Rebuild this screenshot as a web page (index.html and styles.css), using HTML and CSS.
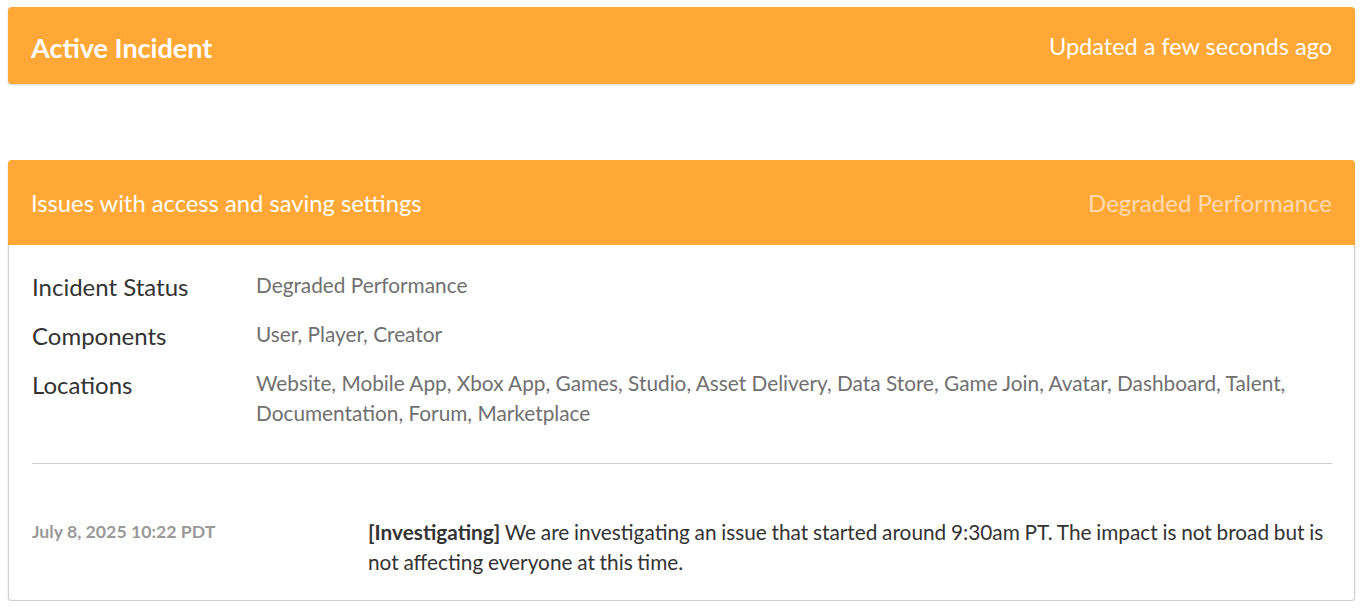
FILE: index.html
```html
<!DOCTYPE html>
<html>
<head>
<meta charset="utf-8">
<link rel="stylesheet" href="styles.css">
</head>
<body>
<div class="page">
  <div class="banner">
    <h1 class="banner-title">Active Incident</h1>
    <span class="banner-updated">Updated a few seconds ago</span>
  </div>

  <div class="incident">
    <div class="incident-head">
      <h2 class="incident-title">Issues with access and saving settings</h2>
      <span class="incident-state">Degraded Performance</span>
    </div>
    <div class="incident-body">
      <div class="facts">
        <div class="fact">
          <div class="fact-label">Incident Status</div>
          <div class="fact-value">Degraded Performance</div>
        </div>
        <div class="fact">
          <div class="fact-label">Components</div>
          <div class="fact-value">User, Player, Creator</div>
        </div>
        <div class="fact">
          <div class="fact-label">Locations</div>
          <div class="fact-value">Website, Mobile App, Xbox App, Games, Studio, Asset Delivery, Data Store, Game Join, Avatar, Dashboard, Talent, Documentation, Forum, Marketplace</div>
        </div>
      </div>
      <div class="update">
        <div class="update-date">July 8, 2025 10:22 PDT</div>
        <p class="update-text"><b class="update-tag">[Investigating]</b> We are investigating an issue that started around 9:30am PT. The impact is not broad but is not affecting everyone at this time.</p>
      </div>
    </div>
  </div>
</div>
</body>
</html>
```

FILE: styles.css
```css
* { box-sizing: border-box; }
html, body { margin: 0; padding: 0; background: #fff; }
body {
  font-family: Lato, "Open Sans", sans-serif;
  color: #333;
}
.page {
  padding: 7px 17px 0 8px;
}
.banner {
  display: flex;
  align-items: center;
  justify-content: space-between;
  height: 77px;
  padding: 0 23px;
  background: #ffa837;
  border-radius: 4px;
  box-shadow: 0 1px 2px rgba(0,0,0,0.18);
  color: #fff;
}
.banner-title {
  margin: 0;
  font-size: 27px;
  font-weight: 700;
  line-height: 1;
  padding-top: 4px;
}
.banner-updated {
  font-size: 23.5px;
  line-height: 1;
  padding-top: 2px;
}
.incident {
  margin-top: 76px;
  border-radius: 4px;
  box-shadow: 0 1px 2px rgba(0,0,0,0.15);
}
.incident-head {
  display: flex;
  align-items: center;
  justify-content: space-between;
  height: 85px;
  padding: 0 23px;
  background: #ffa837;
  border-radius: 4px 4px 0 0;
  color: #fff;
}
.incident-title {
  margin: 0;
  font-size: 23.75px;
  font-weight: 400;
  line-height: 1;
  padding-top: 2px;
}
.incident-state {
  font-size: 24px;
  line-height: 1;
  padding-top: 1px;
  color: rgba(255,255,255,0.6);
}
.incident-body {
  border: 1px solid #d0d0d0;
  border-top: none;
  border-radius: 0 0 4px 4px;
  padding: 0 22px 0 23px;
}
.facts {
  padding: 25px 0 35px;
  border-bottom: 1px solid #d0d0d0;
}
.fact {
  display: grid;
  grid-template-columns: 224px 1fr;
  margin-bottom: 15px;
}
.fact:last-child { margin-bottom: 0; }
.fact-label {
  font-size: 24px;
  line-height: 34px;
  color: #333;
}
.fact-value {
  font-size: 20.8px;
  line-height: 30px;
  color: #707070;
}
.update {
  display: grid;
  grid-template-columns: 336px 1fr;
  padding: 53px 0 23px;
}
.update-date {
  font-size: 17.7px;
  font-weight: 700;
  color: #999;
  line-height: 30px;
}
.update-text {
  margin: 0;
  font-size: 20.8px;
  line-height: 30px;
  word-spacing: -0.6px;
  color: #333;
}
.update-tag { font-weight: 700; }
```
